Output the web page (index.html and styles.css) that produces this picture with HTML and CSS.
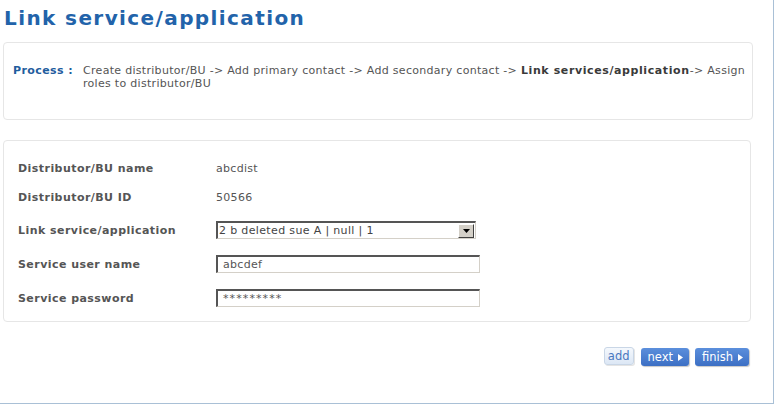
FILE: index.html
```html
<!DOCTYPE html>
<html>
<head>
<meta charset="utf-8">
<link rel="stylesheet" href="styles.css">
</head>
<body>
<div class="page">
  <h1 class="title">Link service/application</h1>
  <div class="box process">
    <span class="plabel">Process :</span>
    <span class="ptext">Create distributor/BU -&gt; Add primary contact -&gt; Add secondary contact -&gt; <b>Link services/application</b>-&gt; Assign roles to distributor/BU</span>
  </div>
  <div class="box form">
    <div class="row r1"><span class="label">Distributor/BU name</span><span class="value">abcdist</span></div>
    <div class="row r2"><span class="label">Distributor/BU ID</span><span class="value">50566</span></div>
    <div class="row r3"><span class="label">Link service/application</span>
      <div class="select"><span class="seltext">2 b deleted sue A | null | 1</span><span class="selbtn"><svg width="7" height="4" viewBox="0 0 7 4"><path d="M0 0H7L3.5 4Z" fill="#000"/></svg></span></div>
    </div>
    <div class="row r4"><span class="label">Service user name</span><div class="input">abcdef</div></div>
    <div class="row r5"><span class="label">Service password</span><div class="input pw">*********</div></div>
  </div>
  <div class="actions">
    <span class="btn add">add</span>
    <span class="btn blue">next <svg width="5" height="7" viewBox="0 0 5 7"><path d="M0 0L5 3.5L0 7Z" fill="#fff"/></svg></span>
    <span class="btn blue">finish <svg width="5" height="7" viewBox="0 0 5 7"><path d="M0 0L5 3.5L0 7Z" fill="#fff"/></svg></span>
  </div>
</div>
</body>
</html>
```
FILE: styles.css
```css
html, body { margin: 0; padding: 0; background: #fff; }
body { font-family: "DejaVu Sans", Verdana, sans-serif; font-size: 11px; color: #555; }
.page {
  width: 773px;
  height: 403px;
  border-right: 1px solid #a9c0d6;
  border-bottom: 1px solid #a9c0d6;
}
.title {
  margin: 0;
  padding: 6px 0 0 4px;
  height: 30px;
  font-size: 20px;
  font-weight: bold;
  color: #2263aa;
  letter-spacing: 1.4px;
}
.box {
  margin: 0 0 0 3px;
  width: 748px;
  border: 1px solid #e6e6e6;
  border-radius: 4px;
}
.process {
  margin-top: 6px;
  height: 76px;
  display: flex;
}
.plabel {
  color: #1f5d9e;
  font-weight: bold;
  letter-spacing: 0.4px;
  padding: 21px 0 0 9px;
  width: 70px;
  flex: none;
}
.ptext {
  padding: 21px 2px 0 0;
  line-height: 13px;
  letter-spacing: 0.3px;
}
.ptext b { color: #3a3a3a; letter-spacing: 0.6px; }
.form {
  margin-top: 20px;
  height: 182px;
  padding-top: 12px;
  box-sizing: border-box;
}
.row {
  display: flex;
  align-items: center;
  height: 30px;
}
.r2 { height: 28px; }
.r3 { height: 38px; }
.r4 { height: 30px; }
.r5 { height: 38px; }
.label {
  width: 198px;
  padding-left: 14px;
  font-weight: bold;
  letter-spacing: 0.45px;
  flex: none;
}
.value { letter-spacing: 0.3px; }
.select {
  width: 260px;
  height: 18px;
  box-sizing: border-box;
  border-top: 2px solid #555;
  border-left: 2px solid #555;
  border-right: 1px solid #d4d0c8;
  border-bottom: 1px solid #d4d0c8;
  display: flex;
  align-items: center;
  justify-content: space-between;
  color: #444;
  letter-spacing: 0.35px;
}
.seltext { padding-left: 1px; }
.selbtn {
  width: 16px;
  height: 14px;
  margin-right: 1px;
  background: #d4d0c8;
  border-top: 1px solid #fff;
  border-left: 1px solid #fff;
  border-right: 1px solid #404040;
  border-bottom: 1px solid #404040;
  box-sizing: border-box;
  display: flex;
  align-items: center;
  justify-content: center;
}
.input {
  width: 264px;
  height: 18px;
  box-sizing: border-box;
  border-top: 2px solid #555;
  border-left: 2px solid #555;
  border-right: 1px solid #d4d0c8;
  border-bottom: 1px solid #d4d0c8;
  padding-left: 5px;
  line-height: 15px;
  color: #555;
  letter-spacing: 0.3px;
}
.pw { letter-spacing: 1.1px; }
.actions {
  display: flex;
  justify-content: flex-end;
  gap: 6px;
  padding: 25px 24px 0 0;
}
.btn {
  height: 18px;
  box-sizing: border-box;
  border-radius: 3px;
  font-size: 11.5px;
  line-height: 17px;
  display: flex;
  align-items: center;
  gap: 5px;
}
.add {
  color: #4a78c0;
  background: linear-gradient(#f4f8fd, #dce7f5);
  border: 1px solid #c9d6e6;
  box-shadow: 1px 1px 0 #e4e4e4;
  padding: 0 3px 0 3px;
  margin-right: 1px;
}
.blue {
  color: #fff;
  background: linear-gradient(#5b8fdc, #3c6fc4);
  box-shadow: 1px 1px 1px #c8c8c8;
  margin-top: 1px;
  padding: 0 6px 0 7px;
}
```
